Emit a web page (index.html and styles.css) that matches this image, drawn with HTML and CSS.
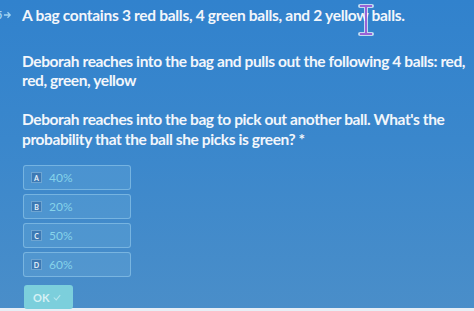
FILE: index.html
```html
<!DOCTYPE html>
<html>
<head>
    <meta charset="UTF-8">
    <link rel="stylesheet" href="styles.css">
</head>
<body>
<div class="screen">
    <div class="question">
        <div class="q-title">
            <span class="q-num">5<svg class="q-arrow" viewBox="0 0 10 8"><path d="M1 4h7M5 1l3 3-3 3" fill="none" stroke="currentColor" stroke-width="1.4"/></svg></span>
            A bag contains 3 red balls, 4 green balls, and 2 yellow balls.
        </div>

        <p class="q-text">Deborah reaches into the bag and pulls out the following 4 balls: red, red, green, yellow</p>

        <p class="q-text q-ask">Deborah reaches into the bag to pick out another ball. What's the probability that the ball she picks is green?&nbsp;*</p>

        <ul class="choices">
            <li class="choice"><span class="key">A</span><span class="label">40%</span></li>
            <li class="choice"><span class="key">B</span><span class="label">20%</span></li>
            <li class="choice"><span class="key">C</span><span class="label">50%</span></li>
            <li class="choice"><span class="key">D</span><span class="label">60%</span></li>
        </ul>

        <button class="ok">OK <svg class="ok-check" viewBox="0 0 10 8"><path d="M1 4l3 3 5-6" fill="none" stroke="currentColor" stroke-width="1.3"/></svg></button>
    </div>

    <!-- text cursor caught in the photo -->
    <svg class="ibeam" viewBox="0 0 16 32">
        <path d="M2 2h12M8 2v28M2 30h12" fill="none" stroke="#fff" stroke-width="4" stroke-linecap="round" opacity="0.7"/>
        <path d="M2 2h12M8 2v28M2 30h12" fill="none" stroke="#9a63d6" stroke-width="2"/>
    </svg>
</div>
<div class="bottom-strip"></div>
</body>
</html>
```

FILE: styles.css
```css
* {
    margin: 0;
    padding: 0;
    box-sizing: border-box;
}

body {
    width: 474px;
    height: 311px;
    overflow: hidden;
    background: linear-gradient(180deg, #3182cd 0%, #3a87cc 45%, #4a8ec9 100%);
    font-family: 'Lato', 'Liberation Sans', Arial, sans-serif;
    color: #f2f6fb;
}

.screen {
    position: relative;
    height: 308px;
}

.question {
    padding: 5px 0 0 22px;
}

.q-title {
    position: relative;
    font-size: 15.5px;
    font-weight: 700;
    line-height: 20px;
    letter-spacing: -0.3px;
    white-space: nowrap;
}

.q-num {
    position: absolute;
    left: -26px;
    top: 0;
    display: flex;
    align-items: center;
    gap: 1px;
    font-size: 11px;
    color: #9fd3f2;
}

.q-arrow {
    width: 9px;
    height: 8px;
}

.q-text {
    margin-top: 27px;
    font-size: 15.5px;
    font-weight: 700;
    line-height: 19px;
    letter-spacing: -0.4px;
}

.q-ask {
    margin-top: 19px;
    line-height: 20px;
    padding-right: 20px;
}

.choices {
    list-style: none;
    margin-top: 16px;
    display: flex;
    flex-direction: column;
    gap: 4px;
}

.choice {
    width: 108px;
    height: 25px;
    margin-left: 1px;
    display: flex;
    align-items: center;
    gap: 7px;
    padding-left: 7px;
    background: rgba(140, 200, 235, 0.18);
    border: 1px solid rgba(170, 220, 245, 0.45);
    border-radius: 3px;
}

.key {
    width: 11px;
    height: 11px;
    display: flex;
    align-items: center;
    justify-content: center;
    background: #3d79b4;
    border: 1px solid rgba(160, 210, 240, 0.5);
    color: #e8f3fb;
    font-size: 7px;
    font-weight: 700;
}

.label {
    font-size: 12px;
    color: #86d3ea;
}

.ok {
    margin: 8px 0 0 2px;
    width: 49px;
    height: 24px;
    display: flex;
    align-items: center;
    gap: 4px;
    padding-left: 9px;
    border: none;
    border-radius: 3px;
    background: #7ccfdc;
    color: #d6f1f5;
    font-family: inherit;
    font-size: 11px;
    font-weight: 700;
}

.ok-check {
    width: 8px;
    height: 7px;
    color: #b7e6ee;
}

.ibeam {
    position: absolute;
    left: 358px;
    top: 4px;
    width: 16px;
    height: 32px;
}

.bottom-strip {
    height: 3px;
    background: #e7eef5;
}
```
